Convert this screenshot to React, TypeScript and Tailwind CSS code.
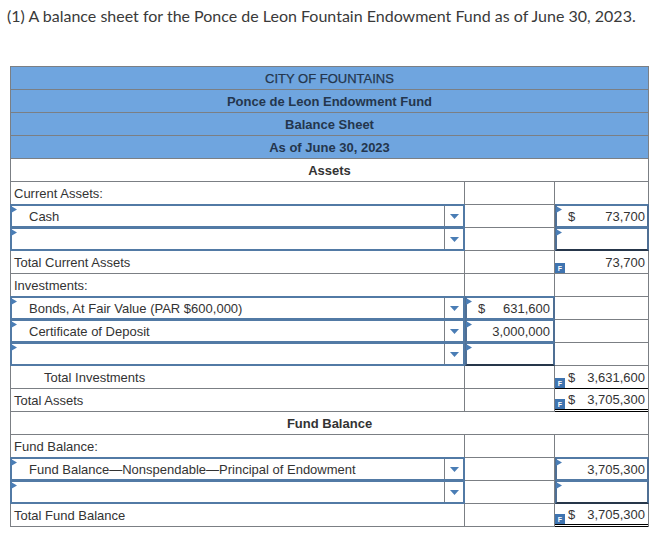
import type { ReactNode } from "react";

type Cell = {
  kind?: "plain" | "input" | "total" | "double";
  sym?: string;
  val?: string;
  f?: boolean;
  last?: boolean;
};

type Row = {
  label?: string;
  indent?: number;
  select?: boolean;
  mid?: Cell;
  right?: Cell;
  head?: boolean;
  heading?: boolean;
  thin?: boolean;
};

const rows: Row[] = [
  { label: "CITY OF FOUNTAINS", head: true, thin: true },
  { label: "Ponce de Leon Endowment Fund", head: true },
  { label: "Balance Sheet", head: true },
  { label: "As of June 30, 2023", head: true },
  { label: "Assets", heading: true },
  { label: "Current Assets:" },
  { label: "Cash", indent: 1, select: true, right: { kind: "input", sym: "$", val: "73,700" } },
  { label: "", select: true, right: { kind: "input", last: true } },
  { label: "Total Current Assets", right: { kind: "plain", val: "73,700", f: true } },
  { label: "Investments:" },
  { label: "Bonds, At Fair Value (PAR $600,000)", indent: 1, select: true, mid: { kind: "input", sym: "$", val: "631,600" } },
  { label: "Certificate of Deposit", indent: 1, select: true, mid: { kind: "input", val: "3,000,000" } },
  { label: "", select: true, mid: { kind: "input", last: true } },
  { label: "Total Investments", indent: 2, right: { kind: "total", sym: "$", val: "3,631,600", f: true } },
  { label: "Total Assets", right: { kind: "double", sym: "$", val: "3,705,300", f: true } },
  { label: "Fund Balance", heading: true },
  { label: "Fund Balance:" },
  { label: "Fund Balance—Nonspendable—Principal of Endowment", indent: 1, select: true, right: { kind: "input", val: "3,705,300" } },
  { label: "", select: true, right: { kind: "input", last: true } },
  { label: "Total Fund Balance", right: { kind: "double", sym: "$", val: "3,705,300", f: true } },
];

function Marker() {
  return (
    <svg className="absolute -left-px top-0" width="6" height="8" viewBox="0 0 6 8">
      <path d="M0 0 L6 3.5 L0 7 Z" fill="#4a7db5" />
    </svg>
  );
}

function Amount({ sym, val, pad }: { sym?: string; val?: string; pad: string }) {
  return (
    <div className={`flex h-full w-full items-center justify-between pt-[2px] ${pad}`}>
      <span>{sym}</span>
      <span>{val}</span>
    </div>
  );
}

function NumCell({ cell, width, inputWidth, inputPad }: { cell?: Cell; width: string; inputWidth: string; inputPad: string }) {
  const kind = cell?.kind;
  if (kind === "input") {
    return (
      <div
        className={`relative z-10 -mr-px -mt-px h-[24px] shrink-0 border-2 border-x-[#4f6f94] border-t-[#527aa5] bg-white ${
          cell?.last ? "border-b-[#26364a]" : "border-b-[#527aa5]"
        } ${inputWidth}`}
      >
        <Marker />
        <Amount sym={cell?.sym} val={cell?.val} pad={`pl-[11px] ${inputPad}`} />
      </div>
    );
  }
  const under =
    kind === "total"
      ? "border-b border-b-black"
      : kind === "double"
        ? "border-b-[3px] border-double border-b-black"
        : "border-b border-b-[#7b7f84]";
  return (
    <div className={`relative h-full shrink-0 ${width} ${under}`}>
      {cell?.f && (
        <span className="absolute bottom-0 left-0 flex h-[10px] w-[10px] items-center justify-center bg-[#3f74b0] text-[7px] font-bold leading-none text-white">
          F
        </span>
      )}
      <Amount sym={cell?.sym} val={cell?.val} pad="pl-[13px] pr-[3px]" />
    </div>
  );
}

function Line({ row }: { row: Row }) {
  let inner: ReactNode;
  if (row.head || row.heading) {
    return (
      <div
        className={`flex h-[23px] items-center justify-center border-b border-b-[#7b7f84] pt-[2px] ${
          row.head ? "bg-[#6fa5df] text-[#24364d]" : "font-bold text-[#333]"
        } ${row.head && !row.thin ? "font-bold" : ""} ${row.thin ? "[-webkit-text-stroke:0.25px]" : ""}`}
      >
        {row.label}
      </div>
    );
  }
  const indent = row.indent === 2 ? "pl-[33px]" : "pl-[3px]";
  if (row.select) {
    inner = (
      <div className="relative z-10 -mx-px -mt-px flex h-[24px] w-[455px] shrink-0 border-2 border-[#527aa5] bg-white">
        <Marker />
        <div className="flex min-w-0 flex-1 items-center whitespace-nowrap pl-[17px] pt-[2px]">{row.label}</div>
        <div className="flex h-full w-[19px] shrink-0 items-center justify-center border-l border-l-[#7b7f84]">
          <svg width="9" height="5" viewBox="0 0 9 5">
            <path d="M0 0 H9 L4.5 5 Z" fill="#4a7db5" />
          </svg>
        </div>
      </div>
    );
  } else {
    inner = (
      <div className={`flex h-full w-[453px] shrink-0 items-center whitespace-nowrap border-b border-b-[#7b7f84] pt-[2px] ${indent}`}>
        {row.label}
      </div>
    );
  }
  return (
    <div className="flex h-[23px]">
      {inner}
      <div className="h-full w-px shrink-0 bg-[#7b7f84]" />
      <NumCell cell={row.mid} width="w-[89px]" inputWidth="w-[90px]" inputPad="pr-[3px]" />
      <div className="h-full w-px shrink-0 bg-[#7b7f84]" />
      <NumCell cell={row.right} width="w-[93px]" inputWidth="w-[94px]" inputPad="pr-[2px]" />
    </div>
  );
}

export default function App() {
  return (
    <div className="h-[536px] w-[665px] overflow-hidden bg-white font-['Liberation_Sans',Arial,sans-serif] text-[13px] text-[#333]">
      <p className="whitespace-nowrap pl-[7px] pt-[6px] font-['Lato',sans-serif] text-[16px] leading-[20px] text-[#3a3a3a]">
        (1) A balance sheet for the Ponce de Leon Fountain Endowment Fund as of June 30, 2023.
      </p>
      <div className="ml-[10px] mt-[40px] w-[639px] border-x border-t border-[#7b7f84]">
        {rows.map((row, i) => (
          <Line key={i} row={row} />
        ))}
      </div>
    </div>
  );
}
